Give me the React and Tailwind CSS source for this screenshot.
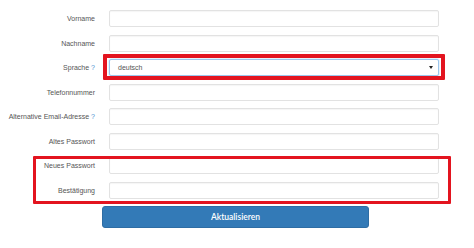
import React from "react";

const rows = [
  { label: "Vorname" },
  { label: "Nachname" },
  { label: "Sprache", help: true, select: true },
  { label: "Telefonnummer" },
  { label: "Alternative Email-Adresse", help: true },
  { label: "Altes Passwort" },
  { label: "Neues Passwort" },
  { label: "Bestätigung" },
];

function Row({ label, help, select }) {
  return (
    <div className="flex items-center h-[17px] mb-[7.5px]">
      <div className="w-[95px] shrink-0 text-right text-[7px] leading-none text-[#555] whitespace-nowrap">
        {label}
        {help && <span className="text-[#4a90d0]"> ?</span>}
      </div>
      {select ? (
        <div className="ml-[14px] w-[330px] h-[17px] flex items-center justify-between rounded-[2px] border border-[#9cc6ec] bg-white shadow-[0_0_2px_rgba(102,175,233,0.6)] pl-[8px] pr-[5px]">
          <span className="text-[7px] leading-none text-[#555]">deutsch</span>
          <svg width="4" height="3" viewBox="0 0 4 3">
            <path d="M0 0 L4 0 L2 3 Z" fill="#222" />
          </svg>
        </div>
      ) : (
        <div className="ml-[14px] w-[330px] h-[17px] rounded-[2px] border border-[#e2e2e2] bg-white shadow-[inset_0_1px_1px_rgba(0,0,0,0.04)]" />
      )}
    </div>
  );
}

export default function App() {
  return (
    <div
      className="relative w-[474px] h-[248px] bg-white overflow-hidden pt-[10px]"
      style={{ fontFamily: '"Liberation Sans", Arial, sans-serif' }}
    >
      {rows.map((r) => (
        <Row key={r.label} {...r} />
      ))}
      <div className="ml-[102px] mt-[0.5px] w-[267px] h-[22px] rounded-[3px] bg-[#337ab7] border border-[#2e6da4] flex items-center justify-center">
        <span
          className="text-white text-[8.5px] font-semibold leading-none"
          style={{ fontFamily: "Lato, 'Open Sans', sans-serif" }}
        >
          Aktualisieren
        </span>
      </div>

      {/* annotation boxes */}
      <div className="absolute left-[103px] top-[53.5px] w-[342px] h-[26.5px] border-[4px] border-[#e3141f] rounded-[1px] pointer-events-none" />
      <div className="absolute left-[33px] top-[156px] w-[418px] h-[47.5px] border-[3.5px] border-[#e3141f] rounded-[1px] pointer-events-none" />
    </div>
  );
}
